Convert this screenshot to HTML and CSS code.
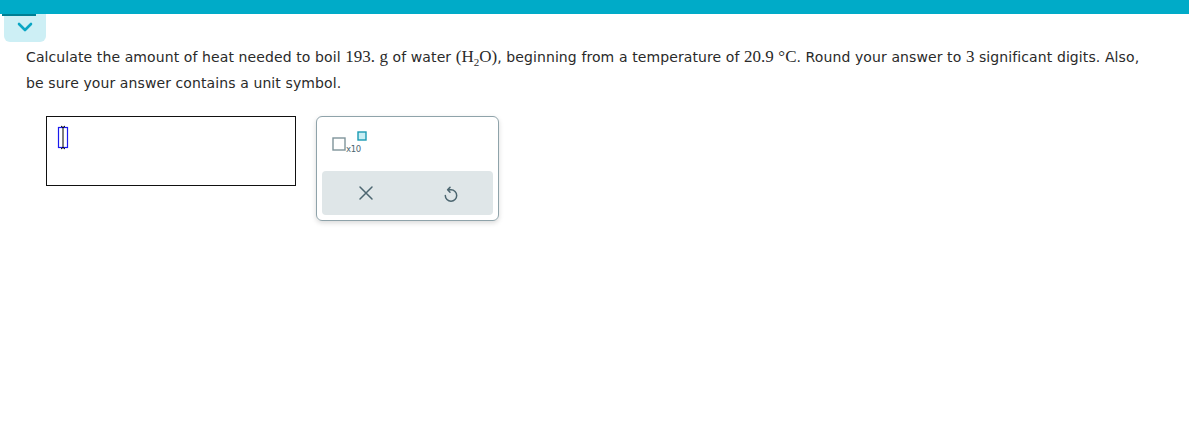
FILE: index.html
```html
<!DOCTYPE html>
<html>
<head>
<meta charset="utf-8">
<link rel="stylesheet" href="styles.css">
</head>
<body>
<div class="topbar"></div>
<div class="tabrow">
  <div class="tab">
    <div class="tabline"></div>
    <svg class="chev" width="16" height="10" viewBox="0 0 16 10"><path d="M2 2 L8 8 L14 2" fill="none" stroke="#0aa6c4" stroke-width="2.6" stroke-linecap="round" stroke-linejoin="round"/></svg>
  </div>
</div>
<div class="question">
  <p class="qtext">Calculate the amount of heat needed to boil <span class="m">193.</span> <span class="m">g</span> of water <span class="m">(H<sub>2</sub>O)</span>, beginning from a temperature of <span class="m">20.9</span> <span class="m">°C</span>. Round your answer to <span class="m">3</span> significant digits. Also, be sure your answer contains a unit symbol.</p>
  <div class="answer">
    <div class="inputbox">
      <div class="caret">
        <svg width="12" height="25" viewBox="0 0 12 25"><rect x="1.5" y="2.5" width="9" height="20" fill="none" stroke="#1a1aee" stroke-width="1.2"/><path d="M4 1 L6 2.5 L8 1 M6 2.5 V22.5 M4 24 L6 22.5 L8 24" fill="none" stroke="#000" stroke-width="1"/></svg>
      </div>
    </div>
    <div class="tools">
      <div class="sci">
        <svg width="40" height="24" viewBox="0 0 40 24"><rect x="1" y="8" width="12" height="12" fill="#fff" stroke="#7f949b" stroke-width="1.4"/><rect x="26" y="2" width="8" height="8" fill="#c7eef4" stroke="#1a9bb3" stroke-width="1.4"/></svg>
        <span class="x10">x10</span>
      </div>
      <div class="btns">
        <svg class="ic" width="16" height="16" viewBox="0 0 16 16"><path d="M2 2 L14 14 M14 2 L2 14" stroke="#4c6670" stroke-width="1.5" stroke-linecap="round"/></svg>
        <svg class="ic" width="16" height="20" viewBox="0 0 16 20"><path d="M2.3 12.5 A5.7 5.7 0 1 0 8 6.8 H4.8 M7 4.4 L4.6 6.8 L7 9.2" fill="none" stroke="#4c6670" stroke-width="1.5" stroke-linecap="round" stroke-linejoin="round"/></svg>
      </div>
    </div>
  </div>
</div>
</body>
</html>
```
FILE: styles.css
```css
html, body { margin: 0; padding: 0; background: #fff; }
body { width: 1189px; height: 442px; overflow: hidden; font-family: "DejaVu Sans", Verdana, sans-serif; color: #222; }
.topbar { height: 14px; background: #00abc8; }
.tabrow { height: 28px; padding-left: 4px; }
.tab { position: relative; width: 42px; height: 28px; background: #cdeff5; border-radius: 0 0 6px 6px; display: flex; align-items: center; justify-content: center; }
.tabline { position: absolute; left: -2px; top: 0; width: 34px; height: 2px; background: #007e93; }
.chev { margin-top: -2px; }
.question { padding-left: 26px; }
.qtext { margin: 2px 0 0 0; width: 1130px; font-size: 14px; letter-spacing: 0.1px; line-height: 26px; color: #2a2a2a; }
.m { font-family: "Liberation Serif", "Times New Roman", serif; font-size: 17px; letter-spacing: 0; }
.m sub { font-size: 11px; vertical-align: -4px; line-height: 0; }
.answer { display: flex; align-items: flex-start; gap: 20px; margin-top: 20px; padding-left: 20px; }
.inputbox { border: 1.5px solid #111; display: flex; align-items: flex-start; padding: 8px 0 0 10px; box-sizing: border-box; width: 250px; height: 70px; }
.caret { line-height: 0; }
.tools { width: 183px; height: 105px; box-sizing: border-box; border: 1px solid #8fa3aa; border-radius: 6px; box-shadow: 0 2px 5px rgba(0,0,0,0.15); padding: 13px 5px 5px 5px; display: flex; flex-direction: column; }
.sci { position: relative; height: 26px; padding-left: 10px; margin-bottom: 15px; line-height: 0; }
.x10 { position: absolute; left: 24px; top: 14px; font-family: "DejaVu Sans", sans-serif; font-size: 8.5px; line-height: 10px; color: #4c6670; letter-spacing: -0.3px; }
.btns { flex: 1; background: #dfe6e8; border-radius: 4px; display: flex; align-items: center; justify-content: flex-start; gap: 69px; padding: 0 0 0 36px; }
.ic { display: block; }
```
